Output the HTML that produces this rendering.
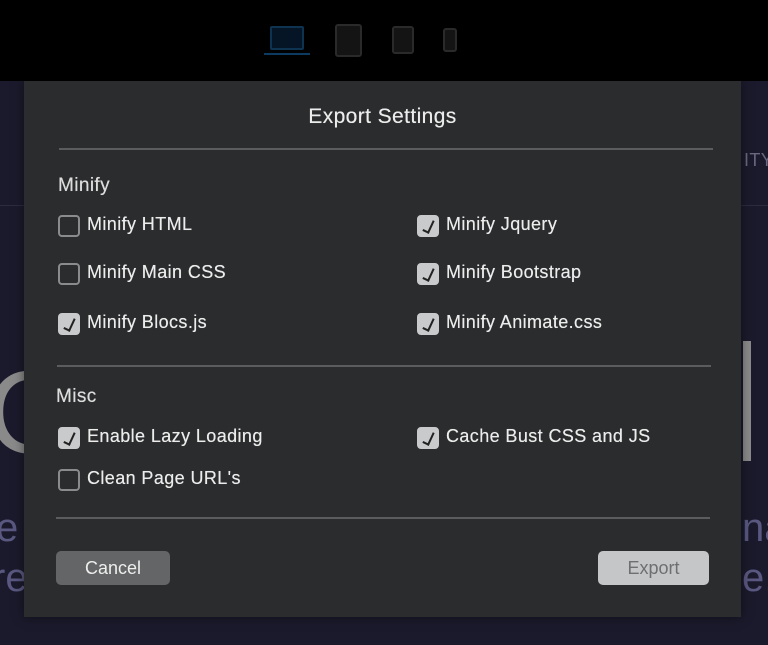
<!DOCTYPE html>
<html><head><style>
*{margin:0;padding:0;box-sizing:border-box}
body{width:768px;height:645px;background:#1b1a2c;position:relative;overflow:hidden;font-family:"Liberation Sans",sans-serif}
.top{position:absolute;left:0;top:0;width:768px;height:81px;background:#000}
.dlg{position:absolute;left:24px;top:81px;width:717px;height:536px;background:#2a2c2d;box-shadow:0 0 10px rgba(0,0,0,.5)}
.t{position:absolute;color:#ececec;font-size:18px;letter-spacing:0.4px;white-space:nowrap;text-shadow:0 0 0.4px #ececec}
.hr{position:absolute;height:2px;background:#5a5c5d}
.cb{position:absolute;width:22px;height:22px;border:2px solid #8a8b8c;border-radius:4px}
.cb.on{background:#c9cacb;border-color:#c9cacb}
.cb.on::after{content:"";position:absolute;left:6px;top:2px;width:5px;height:12px;border:solid #222;border-width:0 2px 2px 0;transform:rotate(25deg)}
.bg{position:absolute;color:#5a5880;font-size:40px}
</style></head><body>
<div class="top">
<div style="position:absolute;left:270px;top:26px;width:34px;height:24px;border:2px solid #0d3350;background:#061525;border-radius:2px"></div>
<div style="position:absolute;left:264px;top:53px;width:46px;height:2px;background:#0d3a60"></div>
<div style="position:absolute;left:335px;top:24px;width:27px;height:33px;border:2px solid #2a2a2a;background:#141414;border-radius:3px"></div>
<div style="position:absolute;left:392px;top:26px;width:22px;height:28px;border:2px solid #2a2a2a;background:#141414;border-radius:3px"></div>
<div style="position:absolute;left:443px;top:28px;width:14px;height:24px;border:2px solid #2a2a2a;background:#141414;border-radius:3px"></div>
</div>
<div class="t" style="left:744px;top:150px;color:#6a6880;font-size:18px;text-shadow:none">ITY</div>
<div style="position:absolute;left:0;top:205px;width:768px;height:1px;background:#2c2b40"></div>
<div class="t" style="left:-14px;top:345px;color:#8a8a8a;font-size:118px;text-shadow:none">C</div>
<div style="position:absolute;left:743px;top:341px;width:8px;height:120px;background:#8a8a8a"></div>
<div class="bg" style="left:-4px;top:506px">e</div>
<div class="bg" style="left:-8px;top:556px">re</div>
<div class="bg" style="left:742px;top:506px">na</div>
<div class="bg" style="left:742px;top:556px">e.</div>
<div class="dlg">
<div class="t" style="left:0;width:717px;text-align:center;top:24px;font-size:21px">Export Settings</div>
<div class="hr" style="left:35px;top:67px;width:654px"></div>
<div class="t" style="left:34px;top:94px;color:#dcdcdc;font-size:19px">Minify</div>
<div class="cb" style="left:34px;top:134px"></div><div class="t" style="left:63px;top:133px">Minify HTML</div>
<div class="cb" style="left:34px;top:182px"></div><div class="t" style="left:63px;top:181px">Minify Main CSS</div>
<div class="cb on" style="left:34px;top:232px"></div><div class="t" style="left:63px;top:231px">Minify Blocs.js</div>
<div class="cb on" style="left:393px;top:134px"></div><div class="t" style="left:422px;top:133px">Minify Jquery</div>
<div class="cb on" style="left:393px;top:182px"></div><div class="t" style="left:422px;top:181px">Minify Bootstrap</div>
<div class="cb on" style="left:393px;top:232px"></div><div class="t" style="left:422px;top:231px">Minify Animate.css</div>
<div class="hr" style="left:33px;top:284px;width:654px"></div>
<div class="t" style="left:32px;top:305px;color:#dcdcdc;font-size:19px">Misc</div>
<div class="cb on" style="left:34px;top:346px"></div><div class="t" style="left:63px;top:345px">Enable Lazy Loading</div>
<div class="cb on" style="left:393px;top:346px"></div><div class="t" style="left:422px;top:345px">Cache Bust CSS and JS</div>
<div class="cb" style="left:34px;top:388px"></div><div class="t" style="left:63px;top:387px">Clean Page URL's</div>
<div class="hr" style="left:32px;top:436px;width:654px"></div>
<div style="position:absolute;left:32px;top:470px;width:114px;height:34px;background:#646566;border-radius:5px;color:#eee;font-size:18px;text-align:center;line-height:34px">Cancel</div>
<div style="position:absolute;left:574px;top:470px;width:111px;height:34px;background:#c4c6c8;border-radius:5px;color:#6d6f71;font-size:18px;text-align:center;line-height:34px">Export</div>
</div>
</body></html>
